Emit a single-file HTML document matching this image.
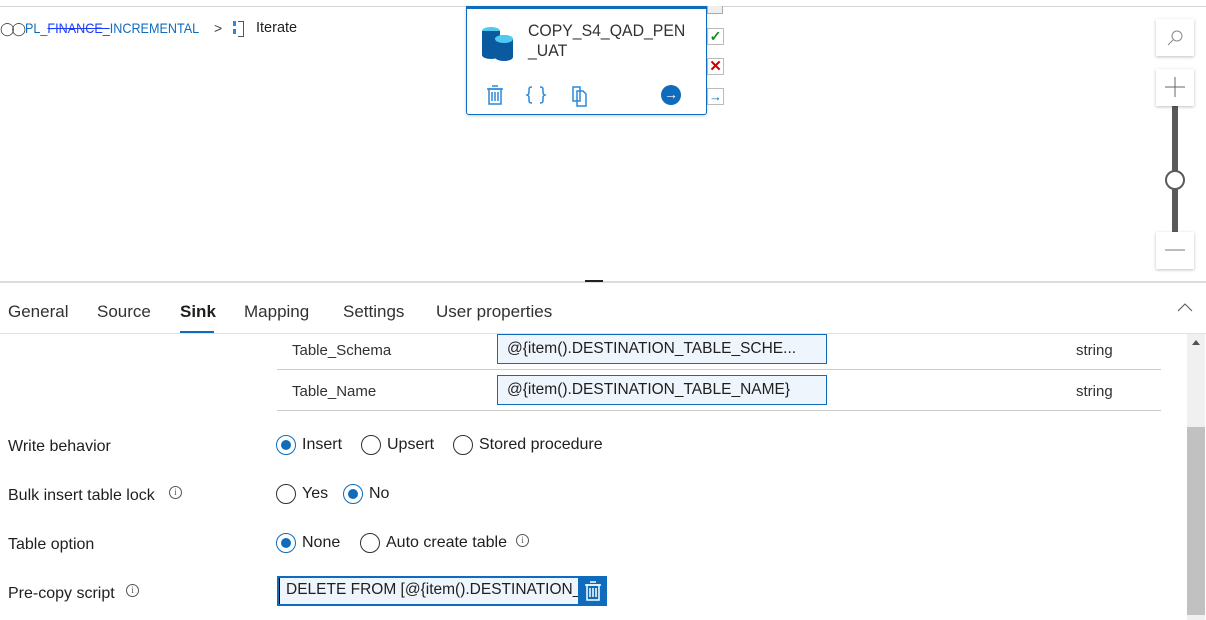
<!DOCTYPE html>
<html><head><meta charset="utf-8"><style>
*{box-sizing:border-box;margin:0;padding:0}
body{width:1206px;height:620px;overflow:hidden;background:#fff;font-family:"Segoe UI","Liberation Sans",sans-serif;color:#323130;position:relative}
.a{position:absolute}
.t{font-size:15px;white-space:nowrap}
.l{font-size:16px;white-space:nowrap;color:#201f1e}
.radio{position:absolute;width:20px;height:20px;border:1px solid #323130;border-radius:50%;background:#fff}
.radio.on{border:1.5px solid #0f6cbd}
.radio.on:after{content:"";position:absolute;left:4px;top:4px;width:10px;height:10px;border-radius:50%;background:#0f6cbd}
.info{position:absolute;width:13px;height:13px;border:1px solid #555;border-radius:50%;font-size:9px;line-height:11px;text-align:center;color:#555;font-family:"Liberation Serif",serif}
.zb{position:absolute;left:1156px;width:38px;height:37px;background:#fff;box-shadow:0 1px 3px rgba(0,0,0,.25)}
.inp{position:absolute;height:30px;border:1px solid #0f6cbd;background:#eef5fc;font-size:15.5px;padding:5px 9px;white-space:nowrap;color:#201f1e}
</style></head><body>
<div class="a" style="left:0;top:6px;width:1206px;height:1px;background:#d4d4d4"></div>
<div class="a t" style="left:0;top:21px;font-size:13px;color:#444;letter-spacing:-3px">&#9711;&#9711;</div>
<div class="a t" style="left:25px;top:20px;font-size:14px;color:#0f6cbd;transform:scaleX(.9);transform-origin:left">PL_<span style="color:#1a3cff;text-decoration:line-through">FINANCE_</span>INCREMENTAL</div>
<div class="a t" style="left:214px;top:20px;font-size:14px;color:#444">&gt;</div>
<div class="a" style="left:233px;top:21px;width:3px;height:5px;background:#2b88d8"></div>
<div class="a" style="left:233px;top:29px;width:3px;height:5px;background:#2b88d8"></div>
<div class="a" style="left:238px;top:21px;width:6px;height:16px;border:1px solid #555;border-left:none"></div>
<div class="a t" style="left:256px;top:20px;font-size:14.5px;color:#201f1e">Iterate</div>
<!-- activity card -->
<div class="a" style="left:466px;top:6px;width:241px;height:109px;border:1px solid #0f6cbd;border-top:3px solid #0f6cbd;border-radius:0 0 3px 3px;background:#fff;box-shadow:0 1px 3px rgba(0,0,0,.2)"></div>
<svg class="a" style="left:480px;top:24px" width="36" height="38"><ellipse cx="11" cy="7" rx="9" ry="4" fill="#50c8f0"/><rect x="2" y="7" width="18" height="24" fill="#0a5aa0"/><ellipse cx="11" cy="31" rx="9" ry="4" fill="#0a5aa0"/><ellipse cx="24" cy="15" rx="9" ry="4" fill="#50c8f0"/><rect x="15" y="15" width="18" height="18" fill="#0a5aa0"/><ellipse cx="24" cy="33" rx="9" ry="4" fill="#0a5aa0"/><ellipse cx="24" cy="15" rx="9" ry="4" fill="#50c8f0"/></svg>
<div class="a" style="left:528px;top:21px;font-size:17px;line-height:20px;color:#323130;transform:scaleX(.93);transform-origin:left">COPY_S4_QAD_PEN<br>_UAT</div>
<svg class="a" style="left:486px;top:84px" width="130" height="24" fill="none" stroke="#2b88d8" stroke-width="1.5"><rect x="3" y="5" width="12" height="15"/><path d="M1 5h16M6 2h6M6 8v9M9 8v9M12 8v9"/><path d="M46 3c-3 0-3 1-3 4s0 3-2 4c2 1 2 1 2 4s0 4 3 4M54 3c3 0 3 1 3 4s0 3 2 4c-2 1-2 1-2 4s0 4-3 4"/><path d="M87 3h7v14h-7zM91 7h6l3 3v12h-9z"/></svg>
<div class="a" style="left:661px;top:85px;width:20px;height:20px;border-radius:50%;background:#0f6cbd;color:#fff;font-size:14px;line-height:19px;text-align:center;font-weight:bold">&#8594;</div>
<div class="a" style="left:707px;top:6px;width:16px;height:8px;border:1px solid #aaa;border-top:none;background:#eee"></div>
<div class="a" style="left:707px;top:28px;width:17px;height:17px;border:1px solid #bbb;color:#1a8a1a;font-size:14px;line-height:15px;text-align:center;font-weight:bold">&#10003;</div>
<div class="a" style="left:707px;top:58px;width:17px;height:17px;border:1px solid #bbb;color:#c00;font-size:15px;line-height:15px;text-align:center;font-weight:bold">&#10005;</div>
<div class="a" style="left:707px;top:88px;width:17px;height:17px;border:1px solid #bbb;color:#0f6cbd;font-size:13px;line-height:15px;text-align:center;font-weight:bold">&#8594;</div>
<!-- zoom -->
<div class="zb" style="top:19px"><svg width="38" height="37"><circle cx="21" cy="17" r="5" fill="none" stroke="#888" stroke-width="1"/><path d="M17 21l-5 5" stroke="#888"/></svg></div>
<div class="a" style="left:1172px;top:100px;width:6px;height:134px;background:#5a5a5a"></div>
<div class="zb" style="top:69px"><svg width="38" height="37"><path d="M19 8v20M9 18h20" stroke="#666" stroke-width="1"/></svg></div>
<div class="a" style="left:1165px;top:170px;width:20px;height:20px;border-radius:50%;border:2px solid #5a5a5a;background:#fff"></div>
<div class="zb" style="top:232px"><svg width="38" height="37"><path d="M9 18h20" stroke="#777" stroke-width="1"/></svg></div>
<!-- divider -->
<div class="a" style="left:0;top:281px;width:1206px;height:2px;background:#dcdcdc"></div>
<div class="a" style="left:585px;top:280px;width:18px;height:2px;background:#222"></div>
<!-- tabs -->
<div class="a t" style="left:8px;top:302px;font-size:17px;color:#323130">General</div>
<div class="a t" style="left:97px;top:302px;font-size:17px;color:#323130">Source</div>
<div class="a t" style="left:180px;top:302px;font-size:17px;font-weight:bold;color:#201f1e">Sink</div>
<div class="a t" style="left:244px;top:302px;font-size:17px;color:#323130">Mapping</div>
<div class="a t" style="left:343px;top:302px;font-size:17px;color:#323130">Settings</div>
<div class="a t" style="left:436px;top:302px;font-size:17px;color:#323130">User properties</div>
<div class="a" style="left:180px;top:331px;width:34px;height:3px;background:#0f6cbd"></div>
<div class="a" style="left:0;top:333px;width:1206px;height:1px;background:#e1e1e1"></div>
<svg class="a" style="left:1176px;top:302px" width="18" height="12"><path d="M2 9l7-7 7 7" fill="none" stroke="#555"/></svg>
<!-- scrollbar -->
<div class="a" style="left:1187px;top:334px;width:18px;height:286px;background:#f0f0f0"></div>
<div class="a" style="left:1187px;top:427px;width:18px;height:188px;background:#c1c1c1"></div>
<svg class="a" style="left:1190px;top:339px" width="12" height="8"><path d="M2 6l4-5 4 5z" fill="#505050"/></svg>
<!-- table -->
<div class="a t" style="left:292px;top:342px;font-size:15px">Table_Schema</div>
<div class="inp" style="left:497px;top:334px;width:330px">@{item().DESTINATION_TABLE_SCHE...</div>
<div class="a t" style="left:1076px;top:342px">string</div>
<div class="a" style="left:277px;top:369px;width:884px;height:1px;background:#ccc"></div>
<div class="a t" style="left:292px;top:383px">Table_Name</div>
<div class="inp" style="left:497px;top:375px;width:330px">@{item().DESTINATION_TABLE_NAME}</div>
<div class="a t" style="left:1076px;top:383px">string</div>
<div class="a" style="left:277px;top:410px;width:884px;height:1px;background:#ccc"></div>
<!-- form -->
<div class="a l" style="left:8px;top:438px">Write behavior</div>
<div class="radio on" style="left:276px;top:435px"></div><div class="a l" style="left:302px;top:436px">Insert</div>
<div class="radio" style="left:361px;top:435px"></div><div class="a l" style="left:387px;top:436px">Upsert</div>
<div class="radio" style="left:453px;top:435px"></div><div class="a l" style="left:479px;top:436px">Stored procedure</div>

<div class="a l" style="left:8px;top:487px">Bulk insert table lock</div><div class="info" style="left:169px;top:486px">i</div>
<div class="radio" style="left:276px;top:484px"></div><div class="a l" style="left:302px;top:485px">Yes</div>
<div class="radio on" style="left:343px;top:484px"></div><div class="a l" style="left:369px;top:485px">No</div>

<div class="a l" style="left:8px;top:536px">Table option</div>
<div class="radio on" style="left:276px;top:533px"></div><div class="a l" style="left:302px;top:534px">None</div>
<div class="radio" style="left:360px;top:533px"></div><div class="a l" style="left:386px;top:534px">Auto create table</div><div class="info" style="left:516px;top:534px">i</div>

<div class="a l" style="left:8px;top:585px">Pre-copy script</div><div class="info" style="left:126px;top:584px">i</div>
<div class="a" style="left:277px;top:576px;width:330px;height:30px;background:#0f6cbd"></div>
<div class="a" style="left:279px;top:578px;width:299px;height:26px;background:#eef5fc;font-size:15.5px;padding:3px 6px;white-space:nowrap;overflow:hidden;color:#201f1e;border-left:1px solid #000">DELETE FROM [@{item().DESTINATION_</div>
<svg class="a" style="left:583px;top:580px" width="20" height="22" fill="none" stroke="#fff" stroke-width="1.5"><rect x="4" y="5" width="12" height="15"/><path d="M2 5h16M7 2h6M7 8v9M10 8v9M13 8v9"/></svg>
</body></html>
